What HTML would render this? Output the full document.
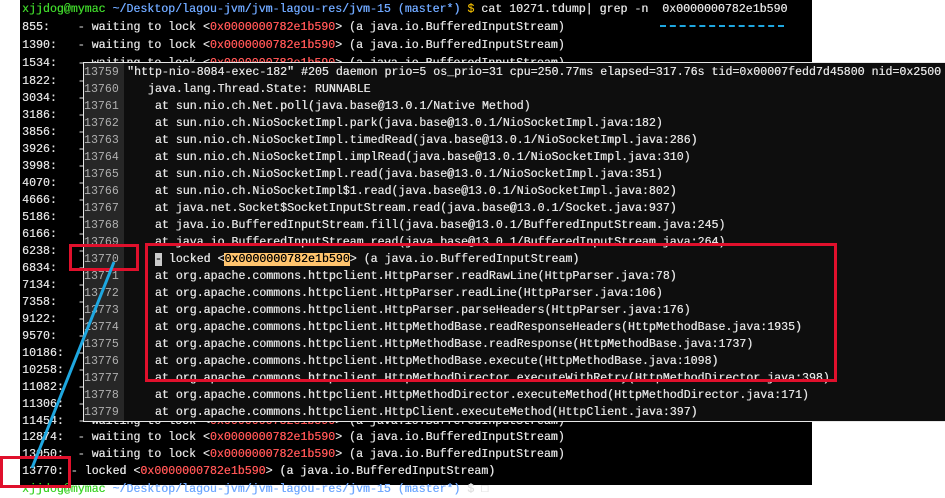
<!DOCTYPE html>
<html><head><meta charset="utf-8"><style>
body{margin:0;width:945px;height:485px;background:#fff;overflow:hidden;position:relative;font-family:"Liberation Mono",monospace;font-size:11.6px;}
.bk{position:absolute;left:20px;top:0;width:792px;height:485px;background:#000;}
.l{position:absolute;left:22px;white-space:pre;color:#e0e0e0;line-height:17px;text-shadow:0.3px 0 0 currentColor;}
.r{color:#ff5555;}
.fp{position:absolute;left:83px;top:62px;width:870px;height:358px;background:#0e0e0e;border:1px solid #e8e8e8;border-right:none;}
.gut{position:absolute;left:84px;top:63px;width:40px;height:358px;background:#272727;}
.f{position:absolute;white-space:pre;color:#e2e2e2;line-height:17px;text-shadow:0.3px 0 0 currentColor;}
.n{position:absolute;left:84px;white-space:pre;color:#b0b0b0;line-height:17px;}
.box{position:absolute;border:3px solid #e0102c;box-sizing:border-box;}
</style></head><body>
<div class="bk"></div>
<div class="l" style="top:1px"><span style="color:#3fd42a">xjjdog@mymac</span> <span style="color:#6fa8ff">~/Desktop/lagou-jvm/jvm-lagou-res/jvm-15</span> <span style="color:#6fa8ff">(master*)</span> <span style="color:#e6b400">$</span> cat 10271.tdump| grep -n  0x0000000782e1b590</div>
<div style="position:absolute;left:660px;top:25px;width:124px;border-top:2px dashed #1ea7e0"></div>
<div class="l" style="top:19px">855:    - waiting to lock &lt;<span class="r">0x0000000782e1b590</span>&gt; (a java.io.BufferedInputStream)</div>
<div class="l" style="top:37px">1390:   - waiting to lock &lt;<span class="r">0x0000000782e1b590</span>&gt; (a java.io.BufferedInputStream)</div>
<div class="l" style="top:55px">1534:   - waiting to lock &lt;<span class="r">0x0000000782e1b590</span>&gt; (a java.io.BufferedInputStream)</div>
<div class="l" style="top:73px">1822:   -</div>
<div class="l" style="top:90px">3034:   -</div>
<div class="l" style="top:107px">3186:   -</div>
<div class="l" style="top:124px">3856:   -</div>
<div class="l" style="top:141px">3926:   -</div>
<div class="l" style="top:158px">3998:   -</div>
<div class="l" style="top:175px">4070:   -</div>
<div class="l" style="top:192px">4666:   -</div>
<div class="l" style="top:209px">5186:   -</div>
<div class="l" style="top:226px">6166:   -</div>
<div class="l" style="top:243px">6238:   -</div>
<div class="l" style="top:260px">6834:   -</div>
<div class="l" style="top:277px">7134:   -</div>
<div class="l" style="top:294px">7358:   -</div>
<div class="l" style="top:311px">9122:   -</div>
<div class="l" style="top:328px">9570:   -</div>
<div class="l" style="top:345px">10186:  -</div>
<div class="l" style="top:362px">10258:  -</div>
<div class="l" style="top:379px">11082:  -</div>
<div class="l" style="top:396px">11306:  -</div>
<div class="l" style="top:413px">11454:  - waiting to lock &lt;<span class="r">0x0000000782e1b590</span>&gt; (a java.io.BufferedInputStream)</div>
<div class="l" style="top:429px">12874:  - waiting to lock &lt;<span class="r">0x0000000782e1b590</span>&gt; (a java.io.BufferedInputStream)</div>
<div class="l" style="top:446px">13050:  - waiting to lock &lt;<span class="r">0x0000000782e1b590</span>&gt; (a java.io.BufferedInputStream)</div>
<div class="l" style="top:463px">13770: - locked &lt;<span class="r">0x0000000782e1b590</span>&gt; (a java.io.BufferedInputStream)</div>
<div class="l" style="top:481px"><span style="color:#3fd42a">xjjdog@mymac</span> <span style="color:#6fa8ff">~/Desktop/lagou-jvm/jvm-lagou-res/jvm-15 (master*)</span> $ &#9633;</div>

<div class="fp"></div><div class="gut"></div>
<div class="n" style="top:64px">13759</div><div class="f" style="left:127px;top:64px">"http-nio-8084-exec-182" #205 daemon prio=5 os_prio=31 cpu=250.77ms elapsed=317.76s tid=0x00007fedd7d45800 nid=0x2500</div>
<div class="n" style="top:81px">13760</div><div class="f" style="left:127px;top:81px">   java.lang.Thread.State: RUNNABLE</div>
<div class="n" style="top:98px">13761</div><div class="f" style="left:127px;top:98px">    at sun.nio.ch.Net.poll(java.base@13.0.1/Native Method)</div>
<div class="n" style="top:115px">13762</div><div class="f" style="left:127px;top:115px">    at sun.nio.ch.NioSocketImpl.park(java.base@13.0.1/NioSocketImpl.java:182)</div>
<div class="n" style="top:132px">13763</div><div class="f" style="left:127px;top:132px">    at sun.nio.ch.NioSocketImpl.timedRead(java.base@13.0.1/NioSocketImpl.java:286)</div>
<div class="n" style="top:149px">13764</div><div class="f" style="left:127px;top:149px">    at sun.nio.ch.NioSocketImpl.implRead(java.base@13.0.1/NioSocketImpl.java:310)</div>
<div class="n" style="top:166px">13765</div><div class="f" style="left:127px;top:166px">    at sun.nio.ch.NioSocketImpl.read(java.base@13.0.1/NioSocketImpl.java:351)</div>
<div class="n" style="top:183px">13766</div><div class="f" style="left:127px;top:183px">    at sun.nio.ch.NioSocketImpl$1.read(java.base@13.0.1/NioSocketImpl.java:802)</div>
<div class="n" style="top:200px">13767</div><div class="f" style="left:127px;top:200px">    at java.net.Socket$SocketInputStream.read(java.base@13.0.1/Socket.java:937)</div>
<div class="n" style="top:217px">13768</div><div class="f" style="left:127px;top:217px">    at java.io.BufferedInputStream.fill(java.base@13.0.1/BufferedInputStream.java:245)</div>
<div class="n" style="top:234px">13769</div><div class="f" style="left:127px;top:234px">    at java.io.BufferedInputStream.read(java.base@13.0.1/BufferedInputStream.java:264)</div>
<div class="n" style="top:251px">13770</div><div class="f" style="left:127px;top:251px">    <span style="background:#ccc;color:#000">-</span> locked &lt;<span style="background:#ffc46e;color:#000">0x0000000782e1b590</span>&gt; (a java.io.BufferedInputStream)</div>
<div class="n" style="top:268px">13771</div><div class="f" style="left:127px;top:268px">    at org.apache.commons.httpclient.HttpParser.readRawLine(HttpParser.java:78)</div>
<div class="n" style="top:285px">13772</div><div class="f" style="left:127px;top:285px">    at org.apache.commons.httpclient.HttpParser.readLine(HttpParser.java:106)</div>
<div class="n" style="top:302px">13773</div><div class="f" style="left:127px;top:302px">    at org.apache.commons.httpclient.HttpParser.parseHeaders(HttpParser.java:176)</div>
<div class="n" style="top:319px">13774</div><div class="f" style="left:127px;top:319px">    at org.apache.commons.httpclient.HttpMethodBase.readResponseHeaders(HttpMethodBase.java:1935)</div>
<div class="n" style="top:336px">13775</div><div class="f" style="left:127px;top:336px">    at org.apache.commons.httpclient.HttpMethodBase.readResponse(HttpMethodBase.java:1737)</div>
<div class="n" style="top:353px">13776</div><div class="f" style="left:127px;top:353px">    at org.apache.commons.httpclient.HttpMethodBase.execute(HttpMethodBase.java:1098)</div>
<div class="n" style="top:370px">13777</div><div class="f" style="left:127px;top:370px">    at org.apache.commons.httpclient.HttpMethodDirector.executeWithRetry(HttpMethodDirector.java:398)</div>
<div class="n" style="top:387px">13778</div><div class="f" style="left:127px;top:387px">    at org.apache.commons.httpclient.HttpMethodDirector.executeMethod(HttpMethodDirector.java:171)</div>
<div class="n" style="top:404px">13779</div><div class="f" style="left:127px;top:404px">    at org.apache.commons.httpclient.HttpClient.executeMethod(HttpClient.java:397)</div>

<div class="box" style="left:69px;top:244px;width:70px;height:27px"></div>
<div class="box" style="left:145px;top:243px;width:692px;height:139px"></div>
<div class="box" style="left:0;top:456px;width:71px;height:32px"></div>
<svg style="position:absolute;left:0;top:0" width="945" height="485"><line x1="114" y1="262" x2="32" y2="468" stroke="#1ea7e0" stroke-width="3"/></svg>
</body></html>
